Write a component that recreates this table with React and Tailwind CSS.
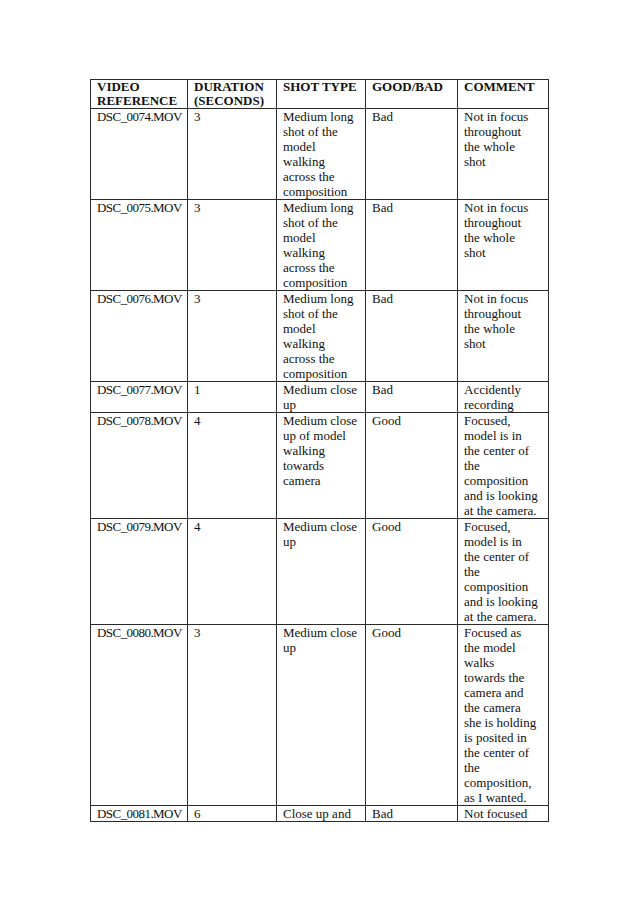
import React from "react";

const rows = [
  {
    ref: "DSC_0074.MOV",
    dur: "3",
    shot: ["Medium long", "shot of the", "model", "walking", "across the", "composition"],
    gb: "Bad",
    comment: ["Not in focus", "throughout", "the whole", "shot"],
  },
  {
    ref: "DSC_0075.MOV",
    dur: "3",
    shot: ["Medium long", "shot of the", "model", "walking", "across the", "composition"],
    gb: "Bad",
    comment: ["Not in focus", "throughout", "the whole", "shot"],
  },
  {
    ref: "DSC_0076.MOV",
    dur: "3",
    shot: ["Medium long", "shot of the", "model", "walking", "across the", "composition"],
    gb: "Bad",
    comment: ["Not in focus", "throughout", "the whole", "shot"],
  },
  {
    ref: "DSC_0077.MOV",
    dur: "1",
    shot: ["Medium close", "up"],
    gb: "Bad",
    comment: ["Accidently", "recording"],
  },
  {
    ref: "DSC_0078.MOV",
    dur: "4",
    shot: ["Medium close", "up of model", "walking", "towards", "camera"],
    gb: "Good",
    comment: ["Focused,", "model is in", "the center of", "the", "composition", "and is looking", "at the camera."],
  },
  {
    ref: "DSC_0079.MOV",
    dur: "4",
    shot: ["Medium close", "up"],
    gb: "Good",
    comment: ["Focused,", "model is in", "the center of", "the", "composition", "and is looking", "at the camera."],
  },
  {
    ref: "DSC_0080.MOV",
    dur: "3",
    shot: ["Medium close", "up"],
    gb: "Good",
    comment: [
      "Focused as",
      "the model",
      "walks",
      "towards the",
      "camera and",
      "the camera",
      "she is holding",
      "is posited in",
      "the center of",
      "the",
      "composition,",
      "as I wanted.",
    ],
  },
  {
    ref: "DSC_0081.MOV",
    dur: "6",
    shot: ["Close up and"],
    gb: "Bad",
    comment: ["Not focused"],
  },
];

function Lines({ lines }) {
  return lines.map((l, i) => (
    <div key={i} className="whitespace-nowrap">
      {l}
    </div>
  ));
}

const cell = "border border-[#2a2a2a] align-top p-0 pl-[6px] whitespace-nowrap";

export default function App() {
  return (
    <div className="min-h-[904px] w-[638px] bg-white pt-[79px] pl-[90px]">
      <table
        className="w-[458px] table-fixed border-collapse text-[13px] leading-[15px] text-[#111]"
        style={{ fontFamily: '"Liberation Serif", serif' }}
      >
        <colgroup>
          <col className="w-[97px]" />
          <col className="w-[89px]" />
          <col className="w-[89px]" />
          <col className="w-[92px]" />
          <col className="w-[91px]" />
        </colgroup>
        <thead>
          <tr className="font-bold text-left leading-[14px]">
            <th className={cell}>
              <Lines lines={["VIDEO", "REFERENCE"]} />
            </th>
            <th className={cell}>
              <Lines lines={["DURATION", "(SECONDS)"]} />
            </th>
            <th className={cell}>SHOT TYPE</th>
            <th className={cell}>GOOD/BAD</th>
            <th className={cell}>COMMENT</th>
          </tr>
        </thead>
        <tbody>
          {rows.map((r) => (
            <tr key={r.ref}>
              <td className={cell + " tracking-[-0.55px]"}>{r.ref}</td>
              <td className={cell}>{r.dur}</td>
              <td className={cell}>
                <Lines lines={r.shot} />
              </td>
              <td className={cell}>{r.gb}</td>
              <td className={cell}>
                <Lines lines={r.comment} />
              </td>
            </tr>
          ))}
        </tbody>
      </table>
    </div>
  );
}
